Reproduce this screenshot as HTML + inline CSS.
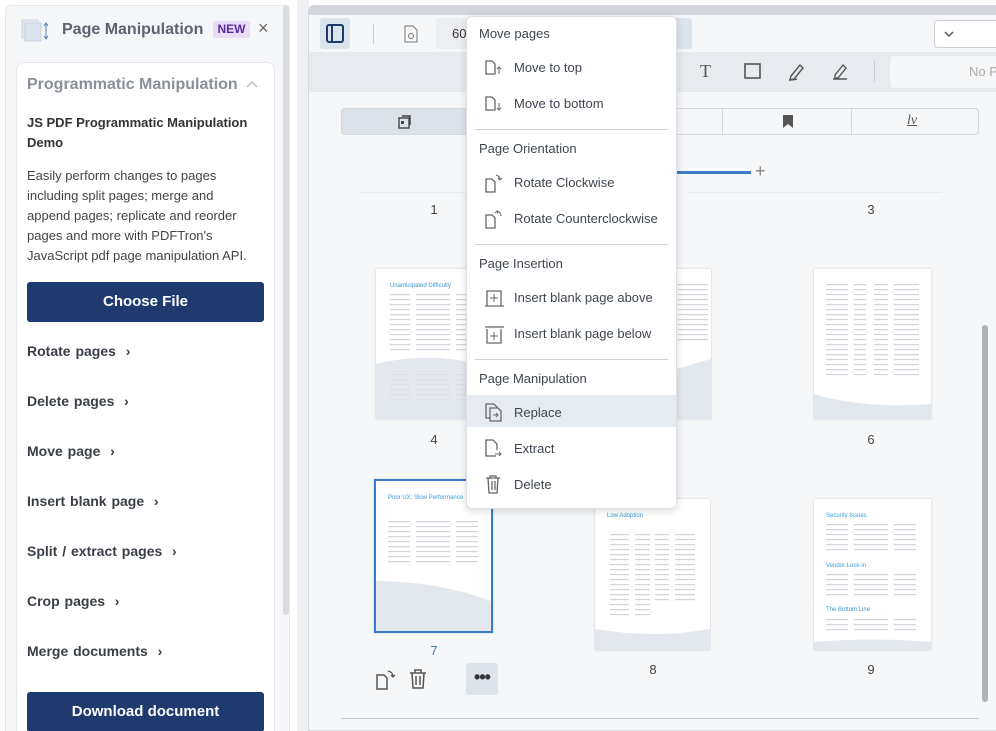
<!DOCTYPE html>
<html><head><meta charset="utf-8"><style>
*{box-sizing:border-box;margin:0;padding:0}
html,body{width:996px;height:731px;overflow:hidden}
body{background:#fff;font-family:"Liberation Sans",sans-serif;position:relative}
.a{position:absolute}
#left{left:5px;top:5px;width:285px;height:726px;background:#f6f7f9;border:1px solid #e6e8eb;border-bottom:none;border-radius:6px 6px 0 0}
.card{left:16px;top:62px;width:259px;height:669px;background:#fff;border:1px solid #e6e8ec;border-bottom:none;border-radius:8px 8px 0 0}
.item{left:27px;font-size:14px;font-weight:bold;color:#3a3f47;word-spacing:1px}
.btn{left:27px;width:237px;height:40px;background:#1f3a6e;border-radius:3px;color:#fff;font-size:15px;font-weight:bold;text-align:center;line-height:40px}
.menu{left:466px;top:16px;width:211px;height:493px;background:#fff;border:1px solid #dde1e6;border-radius:6px;box-shadow:0 2px 8px rgba(0,0,0,.15);font-size:13px;color:#3f4650}
.mh{position:absolute;left:12px}
.mi{position:absolute;left:47px}
.ic{position:absolute;left:17px}
.sep{position:absolute;left:8px;width:193px;height:1px;background:#cfd4da}
.pg{background:#fff;box-shadow:0 0 2px rgba(0,0,0,.2);overflow:hidden}
.num{font-size:13px;color:#444;width:30px;text-align:center}
</style></head><body>
<div class="a" id="left"></div>
<div class="a" style="left:283px;top:5px;width:6px;height:610px;background:#dadcdf;border-radius:3px"></div>
<svg class="a" style="left:20px;top:18px" width="32" height="26"><rect x="2" y="2" width="16" height="18" fill="#e3e8ef" stroke="#ccd4df"/><rect x="5" y="5" width="16" height="18" fill="#dbe3ee" stroke="#c4cfdc"/><path d="M26 6v14M24 8l2-3 2 3M24 18l2 3 2-3" stroke="#4a7fc0" fill="none"/></svg>
<div class="a" style="left:62px;top:21px;font-size:16px;font-weight:bold;color:#5b6470">Page Manipulation</div>
<div class="a" style="left:213px;top:21px;width:37px;height:17px;background:#e8dcf8;color:#5a2d9c;font-size:12px;font-weight:bold;text-align:center;line-height:17px;border-radius:2px">NEW</div>
<div class="a" style="left:258px;top:18px;font-size:18px;color:#666">×</div>
<div class="a card"></div>
<div class="a" style="left:27px;top:76px;font-size:16px;font-weight:bold;color:#8a9099">Programmatic Manipulation</div>
<svg class="a" style="left:245px;top:80px" width="14" height="10"><path d="M2 7l5-5 5 5" stroke="#bbb" fill="none" stroke-width="1.5"/></svg>
<div class="a" style="left:27px;top:113px;font-size:13px;font-weight:bold;color:#333;line-height:20px;width:230px">JS PDF Programmatic Manipulation Demo</div>
<div class="a" style="left:27px;top:166px;font-size:13px;color:#444;line-height:20px;width:226px">Easily perform changes to pages including split pages; merge and append pages; replicate and reorder pages and more with PDFTron's JavaScript pdf page manipulation API.</div>
<div class="a btn" style="top:282px">Choose File</div>
<div class="a item" style="top:343px">Rotate pages &nbsp;›</div>
<div class="a item" style="top:393px">Delete pages &nbsp;›</div>
<div class="a item" style="top:443px">Move page &nbsp;›</div>
<div class="a item" style="top:493px">Insert blank page &nbsp;›</div>
<div class="a item" style="top:543px">Split / extract pages &nbsp;›</div>
<div class="a item" style="top:593px">Crop pages &nbsp;›</div>
<div class="a item" style="top:643px">Merge documents &nbsp;›</div>
<div class="a btn" style="top:692px">Download document</div>

<div class="a" style="left:297px;top:0;width:12px;height:731px;background:#eef0f3"></div>
<div class="a" style="left:308px;top:5px;width:700px;height:726px;background:#f5f7f9;border:1px solid #d8dce0;border-radius:6px 0 0 0"></div>
<div class="a" style="left:308px;top:5px;width:700px;height:10px;background:#d2d6dc;border-radius:6px 0 0 0"></div>
<div class="a" style="left:320px;top:18px;width:30px;height:31px;background:#dbe3ed;border-radius:3px"></div>
<svg class="a" style="left:325px;top:24px" width="20" height="20"><rect x="2" y="1" width="16" height="17" rx="2" fill="none" stroke="#1f3a6e" stroke-width="2"/><path d="M7 1v17" stroke="#1f3a6e" stroke-width="2"/></svg>
<div class="a" style="left:373px;top:24px;width:1px;height:20px;background:#ccc"></div>
<svg class="a" style="left:403px;top:24px" width="16" height="20"><path d="M2 2h8l4 4v12H2z" fill="none" stroke="#777"/><circle cx="8" cy="12" r="2.5" fill="none" stroke="#777"/></svg>
<div class="a" style="left:436px;top:18px;width:40px;height:31px;background:#eceef1;border-radius:3px;font-size:13px;line-height:31px;padding-left:16px;color:#333">60</div>
<div class="a" style="left:660px;top:18px;width:32px;height:31px;background:#dbe3ed;border-radius:3px"></div>
<div class="a" style="left:934px;top:20px;width:70px;height:28px;background:#fff;border:1px solid #ccd1d7;border-radius:4px"></div>
<svg class="a" style="left:943px;top:29px" width="12" height="10"><path d="M2 3l4 4 4-4" stroke="#555" fill="none" stroke-width="1.5"/></svg>
<div class="a" style="left:309px;top:52px;width:690px;height:40px;background:#e7eaee"></div>
<div class="a" style="left:700px;top:61px;font-size:18px;color:#555;font-family:'Liberation Serif',serif">T</div>
<svg class="a" style="left:743px;top:62px" width="20" height="20"><rect x="2" y="2" width="15" height="14" fill="none" stroke="#555" stroke-width="1.6"/></svg>
<svg class="a" style="left:786px;top:60px" width="22" height="22"><path d="M5 16l9-11 3 3-9 11-4 1z M3 20q5 0 8-1" fill="none" stroke="#555" stroke-width="1.4"/></svg>
<svg class="a" style="left:830px;top:60px" width="22" height="22"><path d="M5 15l8-10 3 3-8 10H5z M3 19h14" fill="none" stroke="#555" stroke-width="1.4"/></svg>
<div class="a" style="left:874px;top:60px;width:1px;height:22px;background:#c8ccd1"></div>
<div class="a" style="left:890px;top:56px;width:110px;height:32px;background:#f5f7f9;border-radius:4px;font-size:13px;color:#aaa;line-height:32px;padding-left:79px">No P</div>

<div class="a" style="left:341px;top:108px;width:638px;height:27px;border:1px solid #d4d8dd;border-radius:4px;background:#f5f7f9"></div>
<div class="a" style="left:341px;top:108px;width:129px;height:27px;background:#dce2ea;border:1px solid #d4d8dd;border-radius:4px 0 0 4px"></div>
<div class="a" style="left:722px;top:109px;width:1px;height:25px;background:#d4d8dd"></div>
<div class="a" style="left:851px;top:109px;width:1px;height:25px;background:#d4d8dd"></div>
<svg class="a" style="left:397px;top:114px" width="16" height="16"><rect x="2" y="4" width="10" height="10" fill="none" stroke="#444" stroke-width="1.4"/><path d="M5 2h8v9" fill="none" stroke="#444" stroke-width="1.4"/><rect x="4" y="7" width="3" height="3" fill="#444"/></svg>
<svg class="a" style="left:781px;top:114px" width="14" height="16"><path d="M2 1h10v13l-5-4-5 4z" fill="#555"/></svg>
<div class="a" style="left:907px;top:113px;font-size:14px;color:#555;font-style:italic;font-family:'Liberation Serif',serif;text-decoration:underline">lv</div>
<div class="a" style="left:676px;top:171px;width:75px;height:3px;background:#3b7dc4"></div>
<div class="a" style="left:755px;top:161px;font-size:18px;color:#888">+</div>
<div class="a" style="left:360px;top:192px;width:150px;height:1px;background:#e8eaed"></div>
<div class="a" style="left:687px;top:192px;width:255px;height:1px;background:#e8eaed"></div>
<div class="a num" style="left:419px;top:202px">1</div>
<div class="a num" style="left:856px;top:202px">3</div>

<svg width="0" height="0" style="position:absolute"><defs>
<pattern id="tx" width="40" height="5" patternUnits="userSpaceOnUse"><rect width="34" height="1.2" fill="#d2d5da"/></pattern>
</defs></svg>
<div class="a pg" style="left:376px;top:269px;width:117px;height:150px"><svg width="117" height="150"><text x="14" y="18" font-size="6" fill="#3a9ad9">Unanticipated Difficulty</text><rect x="14" y="25" width="90" height="60" fill="url(#tx)"/><path d="M0 95q60-15 117 5v50H0z" fill="#e3e8ef"/><rect x="14" y="105" width="80" height="30" fill="url(#tx)" opacity=".5"/></svg></div>
<div class="a pg" style="left:676px;top:269px;width:35px;height:150px"><svg width="35" height="150"><rect x="2" y="15" width="30" height="60" fill="url(#tx)"/><path d="M0 100l35-10v60H0z" fill="#e3e8ef"/></svg></div>
<div class="a pg" style="left:814px;top:269px;width:117px;height:150px"><svg width="117" height="150"><rect x="12" y="14" width="40" height="95" fill="url(#tx)"/><rect x="60" y="14" width="45" height="95" fill="url(#tx)"/><path d="M0 125q50 15 117 10v15H0z" fill="#e3e8ef"/></svg></div>
<div class="a num" style="left:419px;top:432px">4</div>
<div class="a num" style="left:856px;top:432px">6</div>
<div class="a pg" style="left:374px;top:479px;width:119px;height:154px;border:2px solid #3b7dc4"><svg width="115" height="150"><text x="12" y="18" font-size="6" fill="#3a9ad9">Poor UX; Slow Performance</text><rect x="12" y="40" width="90" height="45" fill="url(#tx)"/><path d="M0 100q60 0 115 20v30H0z" fill="#e3e8ef"/></svg></div>
<div class="a num" style="left:419px;top:643px;color:#3b7dc4">7</div>
<div class="a pg" style="left:595px;top:499px;width:115px;height:151px"><svg width="115" height="151"><text x="12" y="18" font-size="6" fill="#3a9ad9">Low Adoption</text><rect x="15" y="34" width="40" height="85" fill="url(#tx)"/><rect x="60" y="34" width="40" height="70" fill="url(#tx)"/><path d="M0 130q60 10 115 0v21H0z" fill="#e3e8ef"/></svg></div>
<div class="a pg" style="left:814px;top:499px;width:117px;height:151px"><svg width="117" height="151"><text x="12" y="18" font-size="6" fill="#3a9ad9">Security Issues</text><rect x="12" y="25" width="90" height="30" fill="url(#tx)"/><text x="12" y="68" font-size="6" fill="#3a9ad9">Vendor Lock-in</text><rect x="12" y="75" width="90" height="25" fill="url(#tx)"/><text x="12" y="112" font-size="6" fill="#3a9ad9">The Bottom Line</text><rect x="12" y="118" width="90" height="15" fill="url(#tx)"/><path d="M0 143q60-5 117 0v8H0z" fill="#e3e8ef"/></svg></div>
<div class="a num" style="left:638px;top:662px">8</div>
<div class="a num" style="left:856px;top:662px">9</div>
<svg class="a" style="left:374px;top:668px" width="24" height="24"><path d="M3 7h7l3 3v11H3z" fill="none" stroke="#555" stroke-width="1.5"/><path d="M14 3q5 1 5 6M17 7l2 2 2-2" fill="none" stroke="#555" stroke-width="1.3"/></svg>
<svg class="a" style="left:407px;top:668px" width="22" height="22"><path d="M3 5h16M8 5V2h6v3M5 5l1 15h10l1-15M9 8v9M13 8v9" fill="none" stroke="#555" stroke-width="1.5"/></svg>
<div class="a" style="left:466px;top:663px;width:32px;height:32px;background:#dde3ea;border-radius:3px;text-align:center;font-size:18px;line-height:28px;color:#333;font-weight:bold;letter-spacing:-1px">•••</div>
<div class="a" style="left:982px;top:325px;width:6px;height:377px;background:#aeb3ba;border-radius:3px"></div>
<div class="a" style="left:341px;top:718px;width:638px;height:1px;background:#c8ccd1"></div>

<div class="a menu">
<div class="mh" style="top:9px">Move pages</div>
<svg class="ic" style="top:42px" width="20" height="18"><path d="M2 2h6l3 3v10H2z" fill="none" stroke="#666" stroke-width="1.3"/><path d="M15 15V8M13 10l2-2 2 2" fill="none" stroke="#666"/></svg>
<div class="mi" style="top:43px">Move to top</div>
<svg class="ic" style="top:78px" width="20" height="18"><path d="M2 2h6l3 3v10H2z" fill="none" stroke="#666" stroke-width="1.3"/><path d="M15 8v7M13 13l2 2 2-2" fill="none" stroke="#666"/></svg>
<div class="mi" style="top:79px">Move to bottom</div>
<div class="sep" style="top:112px"></div>
<div class="mh" style="top:124px">Page Orientation</div>
<svg class="ic" style="top:156px" width="22" height="20"><path d="M2 6h6l3 3v10H2z" fill="none" stroke="#666" stroke-width="1.3"/><path d="M12 2q4 1 4 5M14 5l2 2 2-2" fill="none" stroke="#666"/></svg>
<div class="mi" style="top:158px">Rotate Clockwise</div>
<svg class="ic" style="top:192px" width="22" height="20"><path d="M2 6h6l3 3v10H2z" fill="none" stroke="#666" stroke-width="1.3"/><path d="M17 7q0-4 -4-5M11 4l2-2 1 3" fill="none" stroke="#666"/></svg>
<div class="mi" style="top:194px">Rotate Counterclockwise</div>
<div class="sep" style="top:227px"></div>
<div class="mh" style="top:239px">Page Insertion</div>
<svg class="ic" style="top:271px" width="22" height="20"><path d="M3 18V3h14v15M1 18h19" fill="none" stroke="#666" stroke-width="1.3"/><path d="M10 6v8M6 10h8" stroke="#666"/></svg>
<div class="mi" style="top:273px">Insert blank page above</div>
<svg class="ic" style="top:307px" width="22" height="20"><path d="M3 5v14h14V5M1 3h19" fill="none" stroke="#666" stroke-width="1.3"/><path d="M10 8v8M6 12h8" stroke="#666"/></svg>
<div class="mi" style="top:309px">Insert blank page below</div>
<div class="sep" style="top:342px"></div>
<div class="mh" style="top:354px">Page Manipulation</div>
<div style="position:absolute;left:0;top:378px;width:209px;height:32px;background:#e6ebf1"></div>
<svg class="ic" style="top:385px" width="22" height="20"><path d="M2 2h8l3 3v11H2z" fill="none" stroke="#666" stroke-width="1.3"/><path d="M6 6h8l3 3v10H6z" fill="#e6ebf1" stroke="#666" stroke-width="1.3"/><path d="M9 13h5M12 11l2 2-2 2" fill="none" stroke="#666"/></svg>
<div class="mi" style="top:388px">Replace</div>
<svg class="ic" style="top:421px" width="22" height="20"><path d="M12 18H2V2h7l4 4v6" fill="none" stroke="#666" stroke-width="1.3"/><path d="M11 16h6M15 14l2 2-2 2" fill="none" stroke="#666"/></svg>
<div class="mi" style="top:424px">Extract</div>
<svg class="ic" style="top:457px" width="22" height="20"><path d="M2 4h14M6 4V2h6v2M4 4l1 15h8l1-15M8 7v9M11 7v9" fill="none" stroke="#666" stroke-width="1.3"/></svg>
<div class="mi" style="top:460px">Delete</div>
</div>
</body></html>
